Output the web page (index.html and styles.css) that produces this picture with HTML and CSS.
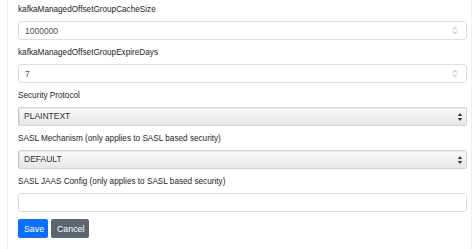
FILE: index.html
```html
<!DOCTYPE html>
<html lang="en">
<head>
<meta charset="UTF-8">
<title>Cluster Config</title>
<link rel="stylesheet" href="styles.css">
</head>
<body>

<!-- CONFIG FORM -->
<div class="card">
  <div class="group">
    <label>kafkaManagedOffsetGroupCacheSize</label>
    <div class="field">
      <input class="input" type="text" value="1000000">
      <svg class="spin" width="6" height="9" viewBox="0 0 6 9"><path d="M1 3.5 L3 1.5 L5 3.5 M1 5.5 L3 7.5 L5 5.5" fill="none" stroke="#9a9a9a" stroke-width="0.9"/></svg>
    </div>
  </div>
  <div class="group">
    <label>kafkaManagedOffsetGroupExpireDays</label>
    <div class="field">
      <input class="input" type="text" value="7">
      <svg class="spin" width="6" height="9" viewBox="0 0 6 9"><path d="M1 3.5 L3 1.5 L5 3.5 M1 5.5 L3 7.5 L5 5.5" fill="none" stroke="#9a9a9a" stroke-width="0.9"/></svg>
    </div>
  </div>
  <div class="group">
    <label>Security Protocol</label>
    <div class="field">
      <div class="select">PLAINTEXT</div>
      <svg class="arrow" width="6" height="10" viewBox="0 0 6 10"><path d="M0.8 4 L3 1 L5.2 4 Z M0.8 6 L3 9 L5.2 6 Z" fill="#333"/></svg>
    </div>
  </div>
  <div class="group">
    <label>SASL Mechanism (only applies to SASL based security)</label>
    <div class="field">
      <div class="select">DEFAULT</div>
      <svg class="arrow" width="6" height="10" viewBox="0 0 6 10"><path d="M0.8 4 L3 1 L5.2 4 Z M0.8 6 L3 9 L5.2 6 Z" fill="#333"/></svg>
    </div>
  </div>
  <div class="group">
    <label>SASL JAAS Config (only applies to SASL based security)</label>
    <div class="field">
      <input class="input" type="text" value="">
    </div>
  </div>
  <div class="actions">
    <button class="btn btn-save">Save</button>
    <button class="btn btn-cancel">Cancel</button>
  </div>
</div>

</body>
</html>
```

FILE: styles.css
```css
body {
  margin: 0;
  font-family: "Liberation Sans", Arial, sans-serif;
  background: #fff;
  color: #212529;
}
.card {
  margin-left: 7px;
  width: 465px;
  height: 249px;
  box-sizing: border-box;
  border-left: 1px solid #f0f0f0;
  border-right: 1px solid #f0f0f0;
  padding: 4px 4px 0 10px;
}
.group {
  margin-bottom: 7px;
}
.group label {
  display: block;
  font-size: 8.2px;
  line-height: 12px;
  margin-bottom: 5px;
}
.field {
  position: relative;
}
.input {
  display: block;
  width: 100%;
  height: 19px;
  box-sizing: border-box;
  border: 1px solid #dcdfe2;
  border-radius: 3px;
  padding: 0 6px;
  font-family: inherit;
  font-size: 8.5px;
  color: #495057;
  background: #fff;
  outline: none;
}
.spin {
  position: absolute;
  right: 9px;
  top: 5px;
}
.select {
  height: 19px;
  box-sizing: border-box;
  border: 1px solid #d4d4d4;
  border-left-color: #c4c4c4;
  border-radius: 2px;
  padding: 0 5px;
  font-size: 8.5px;
  line-height: 17px;
  color: #333;
  background: linear-gradient(#fafafa, #e6e6e6);
  box-shadow: inset 1px 1px 1px rgba(0,0,0,0.06);
}
.arrow {
  position: absolute;
  right: 4px;
  top: 5px;
}
.actions {
  display: flex;
  gap: 3px;
}
.btn {
  height: 19px;
  border: none;
  border-radius: 2px;
  color: #fff;
  font-family: inherit;
  font-size: 8.8px;
  padding: 0 6px;
  cursor: pointer;
}
.btn-save {
  background: #0d6efd;
  width: 30px;
}
.btn-cancel {
  background: #5d6670;
  width: 38px;
}
```
